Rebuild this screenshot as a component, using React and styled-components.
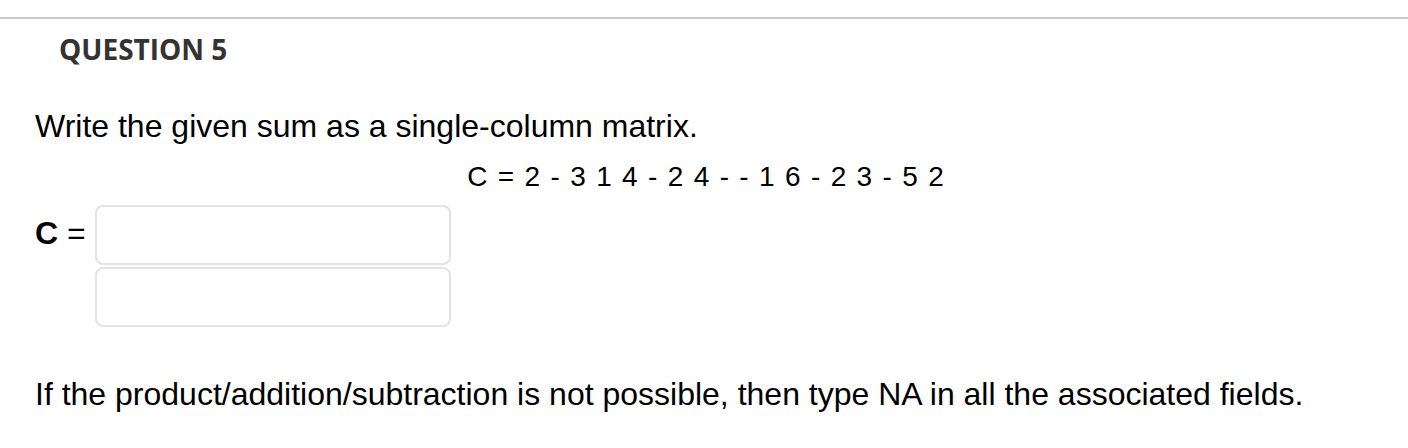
import React from "react";
import styled, { createGlobalStyle } from "styled-components";

const Global = createGlobalStyle`
  html, body { margin: 0; padding: 0; background: #ffffff; }
  body { font-family: "Liberation Sans", Arial, Helvetica, sans-serif; color: #000; }
  * { box-sizing: border-box; }
`;

const Page = styled.div`
  width: 1408px;
  height: 448px;
  background: #fff;
  overflow: hidden;
`;

const Rule = styled.div`
  margin-top: 17px;
  height: 2px;
  background: #c9c9c9;
`;

const Heading = styled.h2`
  margin: 11px 0 0 0;
  padding-left: 59px;
  font-family: "Open Sans", "Noto Sans", sans-serif;
  font-weight: 700;
  font-size: 28px;
  line-height: 38px;
  color: #333333;
`;

const Body = styled.div`
  padding-left: 35px;
`;

const Prompt = styled.p`
  margin: ${(p) => p.$top}px 0 0 0;
  font-size: 32px;
  line-height: 36px;
  color: #000;
`;

const Equation = styled.div`
  margin-top: 18px;
  margin-left: -35px;
  padding-left: 3px;
  text-align: center;
  font-size: 28px;
  line-height: 30px;
  word-spacing: 2.6px;
  color: #000;
`;

const AnswerRow = styled.div`
  display: flex;
  align-items: flex-start;
  margin-top: 13px;
`;

const Label = styled.div`
  width: 60px;
  font-size: 32px;
  line-height: 56px;
  white-space: nowrap;
`;

const Strong = styled.b`
  font-weight: 700;
`;

const Fields = styled.div`
  display: flex;
  flex-direction: column;
  gap: 2px;
`;

const Field = styled.input`
  width: 356px;
  height: 60px;
  border: 2px solid #e3e3e3;
  border-radius: 8px;
  background: #fff;
  outline: none;
  font-size: 28px;
  padding: 0 12px;
`;

export default function App() {
  return (
    <Page>
      <Global />
      <Rule />
      <Heading>QUESTION 5</Heading>
      <Body>
        <Prompt $top={40}>Write the given sum as a single-column matrix.</Prompt>
        <Equation>C = 2 - 3 1 4 - 2 4 - - 1 6 - 2 3 - 5 2</Equation>
        <AnswerRow>
          <Label>
            <Strong>C</Strong> =
          </Label>
          <Fields>
            <Field type="text" aria-label="row 1" />
            <Field type="text" aria-label="row 2" />
          </Fields>
        </AnswerRow>
        <Prompt $top={49}>
          If the product/addition/subtraction is not possible, then type NA in all the associated fields.
        </Prompt>
      </Body>
    </Page>
  );
}
